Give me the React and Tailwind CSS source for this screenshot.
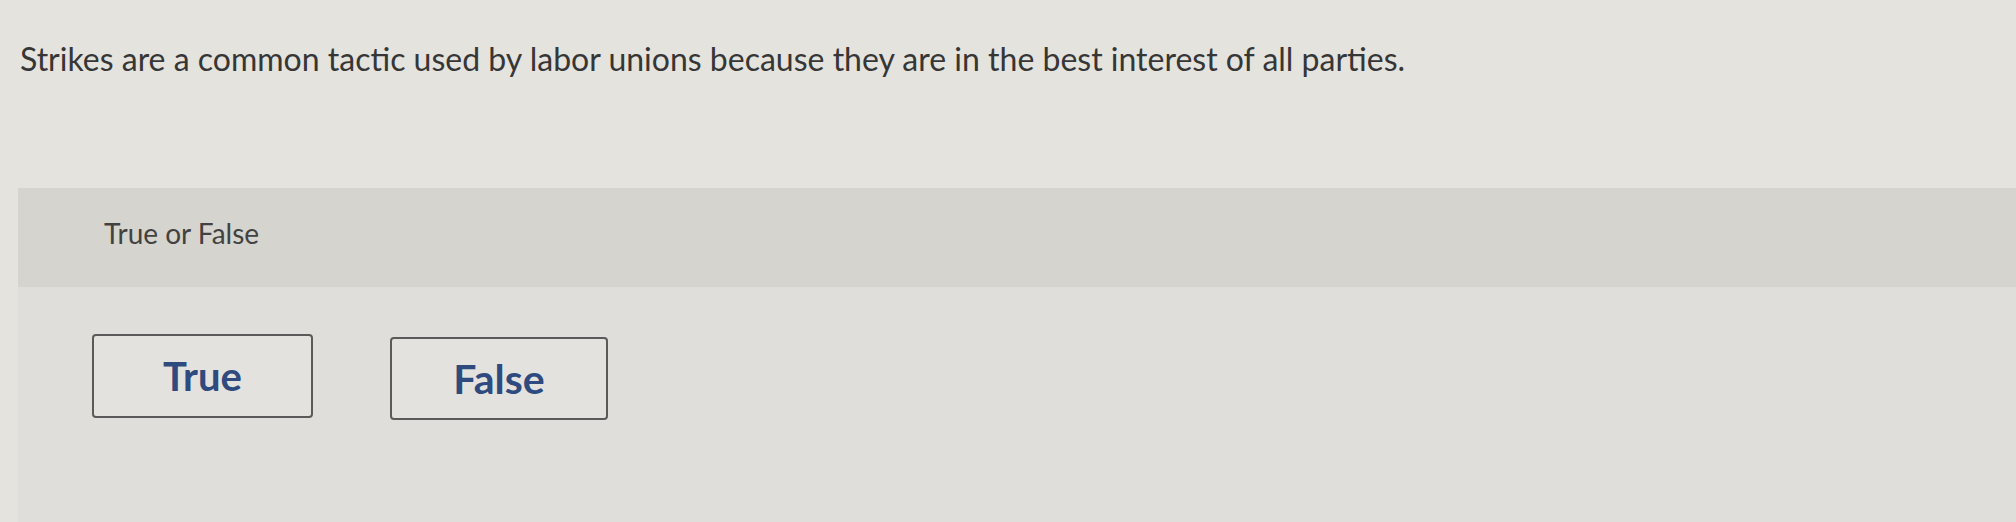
export default function App() {
  return (
    <div
      className="h-[522px] w-full overflow-hidden bg-[#e4e3de] text-[#3b3b3b]"
      style={{ fontFamily: "Lato, 'Open Sans', sans-serif" }}
    >
      <p className="pl-[20px] pt-[39px] text-[32px] leading-[40px] text-[#363636]">
        Strikes are a common tactic used by labor unions because they are in the best interest of all parties.
      </p>

      <section className="ml-[18px] mt-[109px] bg-[#dfdeda]">
        <div className="flex h-[99px] items-start bg-[#d5d4cf] pl-[86px] pt-[28px]">
          <span className="text-[28px] leading-[34px] text-[#424242]">True or False</span>
        </div>
        <div className="flex gap-[77px] pl-[74px] pt-[47px] pb-[120px]">
          <button className="flex h-[84px] w-[221px] items-center justify-center rounded-[4px] border-2 border-[#5a5a5a] bg-[#e3e2de] text-[40px] font-bold text-[#2e4a7e]">
            True
          </button>
          <button className="mt-[3px] flex h-[83px] w-[218px] items-center justify-center rounded-[4px] border-2 border-[#5a5a5a] bg-[#e3e2de] text-[41px] font-bold text-[#2e4a7e]">
            False
          </button>
        </div>
      </section>
    </div>
  );
}
